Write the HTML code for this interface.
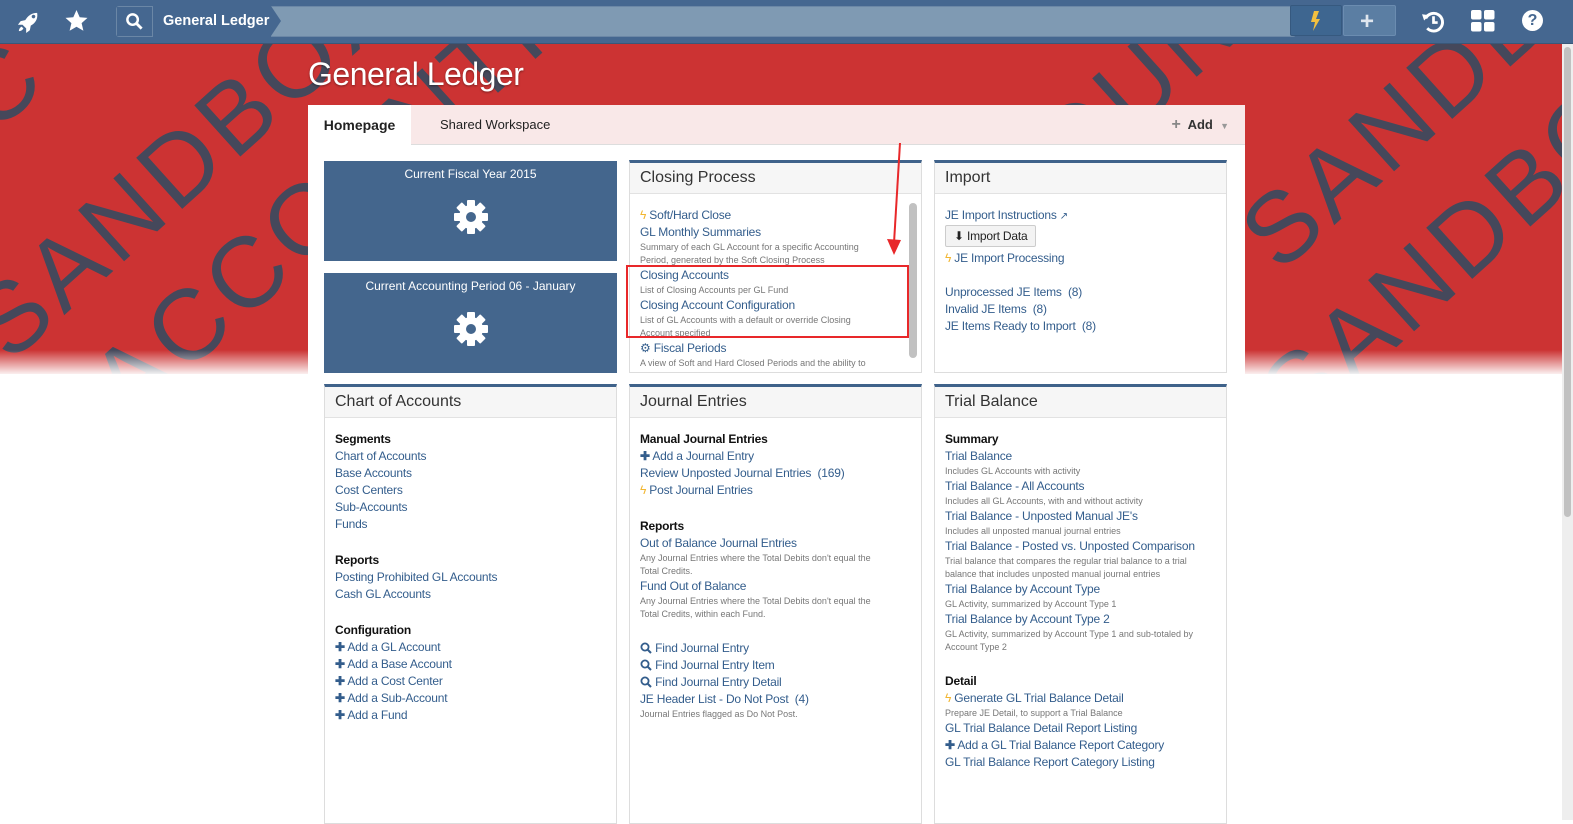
<!DOCTYPE html>
<html><head><meta charset="utf-8"><style>
*{box-sizing:border-box;margin:0;padding:0}
body{width:1573px;height:820px;overflow:hidden;background:#fff;font-family:"Liberation Sans",sans-serif;position:relative}
#red{position:absolute;left:0;top:44px;width:1562px;height:330px;background:#cc3333;overflow:hidden}
#fade{position:absolute;left:0;top:350px;width:1562px;height:26px;background:linear-gradient(rgba(255,255,255,0),#fff)}
#top{position:absolute;left:0;top:0;width:1573px;height:44px;background:#456790;border-bottom:1px solid #3a5778}
#sb{position:absolute;left:1562px;top:44px;width:11px;height:776px;background:#eee}
#sb div{position:absolute;left:2px;top:3px;width:7px;height:470px;background:#c1c1c1;border-radius:4px}
.search{position:absolute;left:116px;top:6px;width:1180px;height:31px;background:#7f9ab3;border:1px solid #6b87a6;border-radius:3px}
.crumb{position:absolute;left:153px;top:6px;height:31px;width:118px;background:#456790;color:#fff;font-weight:bold;font-size:14.5px;line-height:31px;padding-left:10px}
.crumb:after{content:"";position:absolute;right:-10px;top:0;border-left:10px solid #456790;border-top:15.5px solid transparent;border-bottom:15.5px solid transparent}
.btn{position:absolute;top:5px;height:31px;border:1px solid #36597f;border-radius:2px}
#wrap{position:absolute;left:308px;top:105px;width:937px;height:715px;background:#fff}
.tabs{height:40px;background:#f9e8e8;border-bottom:1px solid #ddd;position:relative;font-size:13px}
.tab1{position:absolute;left:0;top:0;width:103px;height:40px;background:#fff;font-weight:bold;font-size:14px;line-height:40px;text-align:center;color:#222}
.tab2{position:absolute;left:132px;top:0;line-height:40px;color:#222}
.add{position:absolute;right:16px;top:0;line-height:40px;color:#333;font-weight:bold}
.panel{position:absolute;border:1px solid #ddd;border-top:3px solid #3f628a;background:#fff;overflow:hidden}
.ph{height:31px;background:#f6f6f6;border-bottom:1px solid #e2e2e2;font-size:16px;line-height:30px;padding-left:10px;color:#333}
.pb{padding:13px 10px 0 10px;font-size:12px;letter-spacing:-0.2px}
.pb div{height:17px;line-height:17px;white-space:nowrap}
.pb .h{font-weight:bold;color:#111}
.pb .l{color:#335d8c}
.pb .d{height:13px;line-height:13px;font-size:9px;color:#777;letter-spacing:0}
.pb .sp{height:19px}
.y{color:#f2b630}
.tile{position:absolute;left:16px;width:293px;height:100px;background:#44668d;color:#fff;text-align:center;font-size:12px;padding-top:6px}
.tile svg{display:block;margin:18px auto 0}
.mg{display:inline-block;vertical-align:-2px}
</style></head><body>
<div id="red">
<svg width="1562" height="330" style="position:absolute;left:0;top:0">
<g fill="#3e4a5e" font-family="Liberation Sans" font-size="100" opacity="0.95">
<text transform="translate(10,320) rotate(-42)" letter-spacing="6">SANDBOX ACCOUNTING</text>
<text transform="translate(-60,140) rotate(-42)" letter-spacing="6">AC</text>
<text transform="translate(130,380) rotate(-42)" letter-spacing="6">ACCOUNTING SANDBOX</text>
<text transform="translate(900,300) rotate(-42)" letter-spacing="6">ACCOUNTING SANDBOX</text>
<text transform="translate(1280,230) rotate(-42)" letter-spacing="6">SANDBOX</text>
<text transform="translate(1300,390) rotate(-42)" letter-spacing="6">SANDBOX</text>
</g></svg>
</div>
<div id="fade"></div>
<div id="top">
<svg style="position:absolute;left:17px;top:11px" width="22" height="22" viewBox="0 0 24 24"><path fill="#fff" d="M22 2c-6 0-10 3-13 8l-5 1-3 4 5 0 4 4 0 5 4-3 1-5c5-3 8-7 7-14zM16 6a2 2 0 1 1 0 .1zM5 17c-2 1-3 3-3 5 2 0 4-1 5-3z"/></svg>
<svg style="position:absolute;left:64px;top:9px" width="25" height="24" viewBox="0 0 24 24"><path fill="#fff" d="M12 1l3.2 7.2 7.8.7-5.9 5.2 1.8 7.7L12 17.8 5.1 21.8l1.8-7.7L1 8.9l7.8-.7z"/></svg>
<div class="search"></div>
<div style="position:absolute;left:117px;top:7px;width:36px;height:29px;background:#456790;border-right:1px solid #6b87a6"></div>
<svg style="position:absolute;left:125px;top:12px" width="19" height="19" viewBox="0 0 20 20"><circle cx="8" cy="8" r="5.5" fill="none" stroke="#fff" stroke-width="2.6"/><path d="M12 12l5.5 5.5" stroke="#fff" stroke-width="3"/></svg>
<div class="crumb">General Ledger</div>
<div class="btn" style="left:1290px;width:52px;background:#3e6690"></div>
<svg style="position:absolute;left:1309px;top:11px" width="14" height="20" viewBox="0 0 14 20"><path fill="#f2c040" d="M5 0h5L7 8h4L4 20l2-9H2z"/></svg>
<div class="btn" style="left:1343px;width:53px;background:#5b7ea3;border-color:#6b8cb0"></div>
<div style="position:absolute;left:1360px;top:8px;color:#dfe6ee;font-size:24px;font-weight:bold">+</div>
<svg style="position:absolute;left:1421px;top:9px" width="25" height="25" viewBox="0 0 24 24"><path fill="none" stroke="#fff" stroke-width="2.8" d="M4.5 9A8.5 8.5 0 1 1 6 18.5"/><path fill="#fff" d="M1 5l7 1-5 5z"/><path fill="none" stroke="#fff" stroke-width="2.6" d="M12 7v6h4"/></svg>
<svg style="position:absolute;left:1471px;top:10px" width="24" height="22"><rect x="0" y="0" width="10.5" height="9.5" rx="2" fill="#fff"/><rect x="13" y="0" width="10.5" height="9.5" rx="2" fill="#fff"/><rect x="0" y="12" width="10.5" height="9.5" rx="2" fill="#fff"/><rect x="13" y="12" width="10.5" height="9.5" rx="2" fill="#fff"/></svg>
<div style="position:absolute;left:1522px;top:10px;width:21px;height:21px;border-radius:50%;background:#fff;color:#456790;font-weight:bold;font-size:16px;text-align:center;line-height:21px">?</div>
</div>
<div id="sb"><div></div></div>
<div style="position:absolute;left:308px;top:56px;color:#fff;font-size:32px;text-shadow:0 1px 2px rgba(0,0,0,.4);letter-spacing:-0.5px">General Ledger</div>
<div id="wrap">
<div class="tabs"><div class="tab1">Homepage</div><div class="tab2">Shared Workspace</div><div class="add"><span style="color:#888;font-size:16px">+</span>&nbsp; Add &nbsp;<span style="color:#999;font-size:9px">▼</span></div></div>
<div class="tile" style="top:56px">Current Fiscal Year 2015<svg width="36" height="36" viewBox="0 0 36 36"><g fill="#fff"><circle cx="18" cy="18" r="12"/><g id="t"><rect x="14" y="1" width="8" height="8" rx="1"/><rect x="14" y="27" width="8" height="8" rx="1"/><rect x="1" y="14" width="8" height="8" rx="1"/><rect x="27" y="14" width="8" height="8" rx="1"/></g><use href="#t" transform="rotate(45 18 18)"/></g><circle cx="18" cy="18" r="5" fill="#44668d"/></svg></div>
<div class="tile" style="top:168px">Current Accounting Period 06 - January<svg width="36" height="36" viewBox="0 0 36 36"><g fill="#fff"><circle cx="18" cy="18" r="12"/><g id="t2"><rect x="14" y="1" width="8" height="8" rx="1"/><rect x="14" y="27" width="8" height="8" rx="1"/><rect x="1" y="14" width="8" height="8" rx="1"/><rect x="27" y="14" width="8" height="8" rx="1"/></g><use href="#t2" transform="rotate(45 18 18)"/></g><circle cx="18" cy="18" r="5" fill="#44668d"/></svg></div>
<div class="panel" style="left:321px;top:55px;width:293px;height:213px"><div class="ph">Closing Process</div>
<div class="pb">
<div class="l"><span class="y">ϟ</span> Soft/Hard Close</div>
<div class="l">GL Monthly Summaries</div>
<div class="d">Summary of each GL Account for a specific Accounting</div>
<div class="d">Period, generated by the Soft Closing Process</div>
<div class="l">Closing Accounts</div>
<div class="d">List of Closing Accounts per GL Fund</div>
<div class="l">Closing Account Configuration</div>
<div class="d">List of GL Accounts with a default or override Closing</div>
<div class="d">Account specified</div>
<div class="l">⚙ Fiscal Periods</div>
<div class="d">A view of Soft and Hard Closed Periods and the ability to</div>
</div>
<div style="position:absolute;left:279px;top:40px;width:8px;height:155px;background:#c1c1c1;border-radius:4px"></div>
</div>
<div class="panel" style="left:626px;top:55px;width:293px;height:213px"><div class="ph">Import</div>
<div class="pb">
<div class="l">JE Import Instructions <span style="font-size:10px">↗</span></div>
<div style="height:24px;margin-top:1px"><span style="display:inline-block;border:1px solid #ccc;background:#f3f3f3;border-radius:2px;height:22px;line-height:20px;padding:0 8px;color:#222">⬇ Import Data</span></div>
<div class="l" style="margin-top:1px"><span class="y">ϟ</span> JE Import Processing</div>
<div class="sp" style="height:17px"></div>
<div class="l">Unprocessed JE Items &nbsp;(8)</div>
<div class="l">Invalid JE Items &nbsp;(8)</div>
<div class="l">JE Items Ready to Import &nbsp;(8)</div>
</div></div>
<div style="position:absolute;left:318px;top:160px;width:283px;height:73px;border:2px solid #e8282a"></div>
<svg style="position:absolute;left:570px;top:38px" width="30" height="120"><path d="M22 0L16 100" stroke="#e8282a" stroke-width="2"/><path d="M9 96l7 16 7-15z" fill="#e8282a"/></svg>

<div class="panel" style="left:16px;top:279px;width:293px;height:440px"><div class="ph">Chart of Accounts</div>
<div class="pb">
<div class="h">Segments</div>
<div class="l">Chart of Accounts</div><div class="l">Base Accounts</div><div class="l">Cost Centers</div><div class="l">Sub-Accounts</div><div class="l">Funds</div>
<div class="sp"></div>
<div class="h">Reports</div>
<div class="l">Posting Prohibited GL Accounts</div><div class="l">Cash GL Accounts</div>
<div class="sp"></div>
<div class="h">Configuration</div>
<div class="l"><b>✚</b> Add a GL Account</div><div class="l"><b>✚</b> Add a Base Account</div><div class="l"><b>✚</b> Add a Cost Center</div><div class="l"><b>✚</b> Add a Sub-Account</div><div class="l"><b>✚</b> Add a Fund</div>
</div></div>
<div class="panel" style="left:321px;top:279px;width:293px;height:440px"><div class="ph">Journal Entries</div>
<div class="pb">
<div class="h">Manual Journal Entries</div>
<div class="l"><b>✚</b> Add a Journal Entry</div>
<div class="l">Review Unposted Journal Entries &nbsp;(169)</div>
<div class="l"><span class="y">ϟ</span> Post Journal Entries</div>
<div class="sp"></div>
<div class="h">Reports</div>
<div class="l">Out of Balance Journal Entries</div>
<div class="d">Any Journal Entries where the Total Debits don't equal the</div><div class="d">Total Credits.</div>
<div class="l">Fund Out of Balance</div>
<div class="d">Any Journal Entries where the Total Debits don't equal the</div><div class="d">Total Credits, within each Fund.</div>
<div class="sp"></div>
<div class="l"><svg class="mg" width="12" height="12" viewBox="0 0 12 12"><circle cx="5" cy="5" r="3.6" fill="none" stroke="#335d8c" stroke-width="1.8"/><path d="M7.5 7.5l3.5 3.5" stroke="#335d8c" stroke-width="2"/></svg> Find Journal Entry</div><div class="l"><svg class="mg" width="12" height="12" viewBox="0 0 12 12"><circle cx="5" cy="5" r="3.6" fill="none" stroke="#335d8c" stroke-width="1.8"/><path d="M7.5 7.5l3.5 3.5" stroke="#335d8c" stroke-width="2"/></svg> Find Journal Entry Item</div><div class="l"><svg class="mg" width="12" height="12" viewBox="0 0 12 12"><circle cx="5" cy="5" r="3.6" fill="none" stroke="#335d8c" stroke-width="1.8"/><path d="M7.5 7.5l3.5 3.5" stroke="#335d8c" stroke-width="2"/></svg> Find Journal Entry Detail</div>
<div class="l">JE Header List - Do Not Post &nbsp;(4)</div>
<div class="d">Journal Entries flagged as Do Not Post.</div>
</div></div>
<div class="panel" style="left:626px;top:279px;width:293px;height:440px"><div class="ph">Trial Balance</div>
<div class="pb">
<div class="h">Summary</div>
<div class="l">Trial Balance</div><div class="d">Includes GL Accounts with activity</div>
<div class="l">Trial Balance - All Accounts</div><div class="d">Includes all GL Accounts, with and without activity</div>
<div class="l">Trial Balance - Unposted Manual JE's</div><div class="d">Includes all unposted manual journal entries</div>
<div class="l">Trial Balance - Posted vs. Unposted Comparison</div><div class="d">Trial balance that compares the regular trial balance to a trial</div><div class="d">balance that includes unposted manual journal entries</div>
<div class="l">Trial Balance by Account Type</div><div class="d">GL Activity, summarized by Account Type 1</div>
<div class="l">Trial Balance by Account Type 2</div><div class="d">GL Activity, summarized by Account Type 1 and sub-totaled by</div><div class="d">Account Type 2</div>
<div class="sp"></div>
<div class="h">Detail</div>
<div class="l"><span class="y">ϟ</span> Generate GL Trial Balance Detail</div><div class="d">Prepare JE Detail, to support a Trial Balance</div>
<div class="l">GL Trial Balance Detail Report Listing</div>
<div class="l"><b>✚</b> Add a GL Trial Balance Report Category</div>
<div class="l">GL Trial Balance Report Category Listing</div>
</div></div>
</div>
</body></html>
